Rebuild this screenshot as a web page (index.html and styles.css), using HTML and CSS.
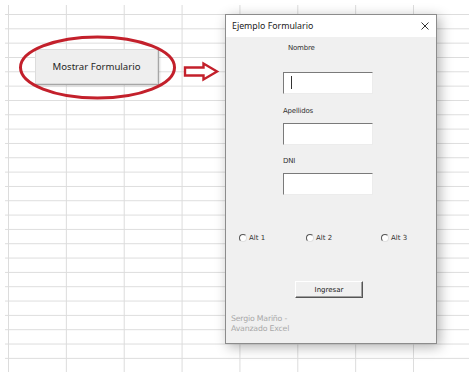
FILE: index.html
```html
<!DOCTYPE html>
<html lang="es">
<head>
    <meta charset="UTF-8">
    <title>Ejemplo Formulario</title>
    <link rel="stylesheet" href="styles.css">
</head>
<body>
    <div class="sheet">
        <div class="grid"></div>

        <!-- botón de la hoja -->
        <div class="sheet-btn">Mostrar Formulario</div>

        <svg class="marks" width="230" height="110" viewBox="0 0 230 110">
            <ellipse cx="97.5" cy="67.5" rx="77" ry="30.5" fill="none" stroke="#c3202b" stroke-width="3"/>
            <polygon points="185,67.5 203.5,67.5 203.5,63.5 217,71.5 203.5,79.5 203.5,75.5 185,75.5"
                     fill="#fff" stroke="#c3202b" stroke-width="2.4" stroke-linejoin="miter"/>
        </svg>

        <!-- UserForm -->
        <div class="form">
            <div class="titlebar">
                <span class="title">Ejemplo Formulario</span>
                <svg class="close" width="8" height="8" viewBox="0 0 8 8">
                    <path d="M0.5 0.5 L7.5 7.5 M7.5 0.5 L0.5 7.5" stroke="#333" stroke-width="1"/>
                </svg>
            </div>
            <div class="form-body">
                <div class="lbl lbl-nombre">Nombre</div>
                <div class="txt txt-first"><span class="caret"></span></div>
                <div class="lbl lbl-ape">Apellidos</div>
                <div class="txt"></div>
                <div class="lbl lbl-dni">DNI</div>
                <div class="txt"></div>

                <div class="radios">
                    <label class="opt"><span class="dot"></span>Alt 1</label>
                    <label class="opt"><span class="dot"></span>Alt 2</label>
                    <label class="opt"><span class="dot"></span>Alt 3</label>
                </div>

                <div class="btn">Ingresar</div>

                <div class="credit">Sergio Mariño -<br>Avanzado Excel</div>
            </div>
        </div>
    </div>
</body>
</html>
```

FILE: styles.css
```css
html, body { margin: 0; padding: 0; background: #fff; }
.sheet {
    position: relative;
    width: 474px;
    height: 380px;
    overflow: hidden;
    background: #fff;
    font-family: "Noto Sans", "DejaVu Sans", sans-serif;
}

/* cuadrícula de excel */
.grid {
    position: absolute;
    left: 5px;
    top: 5px;
    width: 464px;
    height: 367px;
    background-image:
        linear-gradient(to right, #dcdcdc 1px, transparent 1px),
        linear-gradient(to bottom, #dcdcdc 1px, transparent 1px);
    background-size: 57.86px 100%, 100% 14.333px;
    background-position: 3px 0, 0 9px;
}

.sheet-btn {
    position: absolute;
    left: 35px;
    top: 49px;
    width: 121px;
    height: 33px;
    background: #eeeeee;
    border: 1px solid #dcdcdc;
    box-shadow: 1px 1px 0 #a6a6a6, 2px 2px 2px rgba(0,0,0,0.15);
    display: flex;
    align-items: center;
    justify-content: center;
    font-size: 9.6px;
    color: #262626;
}

.marks { position: absolute; left: 0; top: 0; }

/* formulario */
.form {
    position: absolute;
    left: 225px;
    top: 14px;
    width: 210px;
    height: 328px;
    border: 1px solid #8c8c8c;
    background: #f0f0f0;
    box-shadow: 3px 3px 12px rgba(0,0,0,0.3);
    display: flex;
    flex-direction: column;
}
.titlebar {
    height: 22px;
    background: #fff;
    display: flex;
    align-items: center;
    justify-content: space-between;
    padding: 0 7px 0 6px;
}
.title { font-size: 8.8px; color: #222; }

.form-body {
    flex: 1;
    display: flex;
    flex-direction: column;
    align-items: flex-start;
    padding-top: 6px;
    font-family: "DejaVu Sans", sans-serif;
    font-size: 7px;
    color: #333;
}
.lbl { height: 10px; line-height: 10px; margin-left: 57px; letter-spacing: -0.2px; }
.lbl-nombre { margin-left: 62px; }
.lbl-ape { margin-top: 12px; }
.lbl-dni { margin-top: 11px; }

.txt {
    margin: 7px 0 0 57px;
    width: 88px;
    height: 20px;
    background: #fff;
    border: 1.5px solid;
    border-color: #7a7a7a #ececec #ececec #7a7a7a;
    position: relative;
}
.txt-first { margin-top: 19px; }
.caret {
    position: absolute;
    left: 7px;
    top: 3px;
    width: 1px;
    height: 13px;
    background: #333;
}

.radios {
    margin-top: 38px;
    padding-left: 13px;
    display: grid;
    grid-template-columns: 67px 75px auto;
    line-height: 10px;
}
.opt { display: flex; align-items: center; gap: 2px; }
.dot {
    width: 6px;
    height: 6px;
    border-radius: 50%;
    background: #fff;
    border: 1px solid;
    border-color: #555 #e0e0e0 #e0e0e0 #555;
}

.btn {
    margin: 38px 0 0 69px;
    width: 66px;
    height: 15px;
    background: #f0f0f0;
    border: 1px solid;
    border-color: #fff #555 #555 #fff;
    box-shadow: inset -1px -1px 0 #a0a0a0;
    display: flex;
    align-items: center;
    justify-content: center;
    color: #222;
}

.credit {
    margin: 16px 0 0 5px;
    font-size: 7.8px;
    line-height: 10px;
    letter-spacing: -0.2px;
    color: #a8a8a8;
}
```
